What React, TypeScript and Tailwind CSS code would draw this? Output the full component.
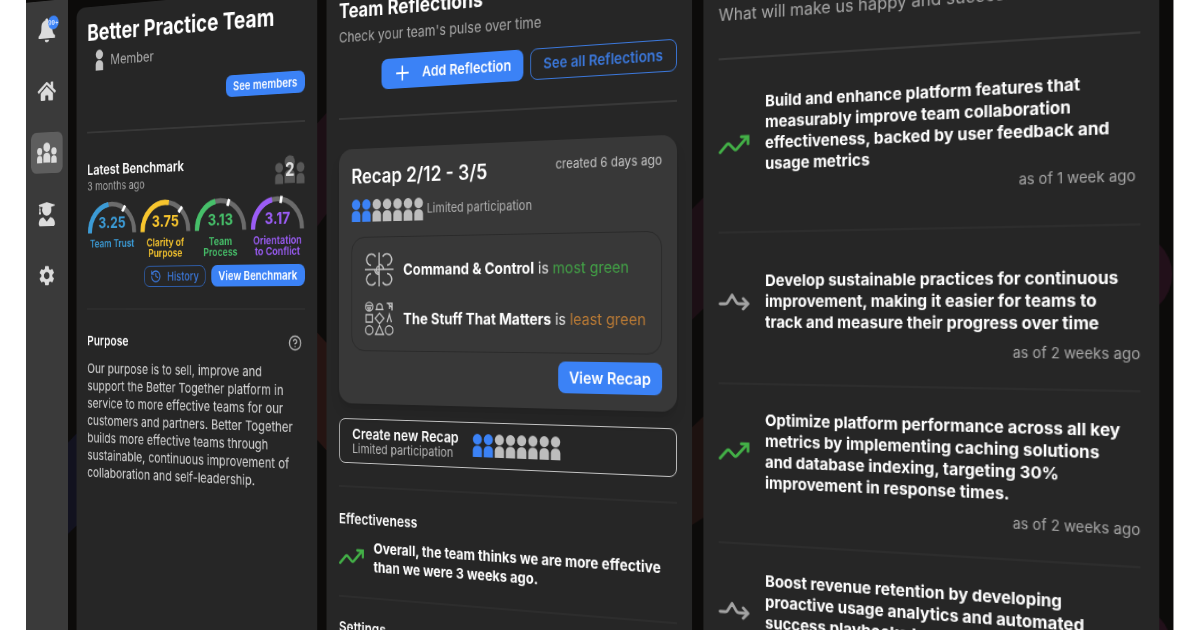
import type { ReactNode } from 'react';
import { History, Plus, CircleHelp } from 'lucide-react';
import { FaHome, FaUserGraduate } from 'react-icons/fa';
import { MdSettings } from 'react-icons/md';

function BellIcon() {
  return (
    <svg viewBox="0 0 28 30" className="h-[30px] w-7" fill="currentColor" aria-hidden="true">
      <path d="M14 1.5c1.4 0 2.3 1 2.3 2.3 3.9 1 6 4.300 6 8.400 0 5.600 1.200 7.800 4.200 9.900v2.900H1.500v-2.900c3-2.100 4.200-4.300 4.200-9.900 0-4.100 2.100-7.400 6-8.400 0-1.300.9-2.300 2.300-2.300z" />
      <path d="M10.800 26.800h6.400a3.200 2.600 0 0 1-6.400 0z" />
    </svg>
  );
}

function PersonShape({ x, y = 0, scale = 1 }: { x: number; y?: number; scale?: number }) {
  return (
    <g transform={`translate(${x} ${y}) scale(${scale})`}>
      <ellipse cx="6" cy="5.600" rx="5.300" ry="5.600" />
      <path d="M.6 24v-6.500c0-3.400 2.200-5.200 5.400-5.200s5.400 1.800 5.400 5.200V24z" />
    </g>
  );
}

function TeamIcon({ className }: { className: string }) {
  return (
    <svg viewBox="0 0 41 32" className={className} fill="currentColor" aria-hidden="true">
      <PersonShape x={0} y={8} />
      <PersonShape x={29} y={8} />
      <PersonShape x={12.700} y={0} scale={1.3} />
    </svg>
  );
}

function PeopleMeter({ total, active }: { total: number; active: number }) {
  return (
    <span className="flex gap-px" role="img" aria-label={`${active} of ${total} participating`}>
      {Array.from({ length: total }, (_, i) => (
        <svg
          key={i}
          viewBox="0 0 12 24"
          className={i < active ? 'h-6 w-3 text-[#3b82f6]' : 'h-6 w-3 text-[#bdbdbd]'}
          fill="currentColor"
        >
          <PersonShape x={0} />
        </svg>
      ))}
    </span>
  );
}

function TrendUp() {
  return (
    <svg viewBox="0 0 32 20" className="h-5 w-8 shrink-0 text-[#43b047]" fill="none" stroke="currentColor" strokeWidth="2.800" strokeLinecap="round" strokeLinejoin="round" role="img" aria-label="Improving">
      <path d="M1.500 17.500 8.500 10q1.500-1.500 3 0l4.500 4.500q1.500 1.500 3 0L29 4" />
      <path d="M23.500 3H30.500V10" strokeLinejoin="miter" />
    </svg>
  );
}

function TrendFlat() {
  return (
    <svg viewBox="0 0 32 20" className="h-5 w-8 shrink-0 text-[#a3a3a3]" fill="none" stroke="currentColor" strokeWidth="2.800" strokeLinecap="round" strokeLinejoin="round" role="img" aria-label="Steady">
      <path d="M1.500 12H7q1.500 0 2.300-1.300L14 3.500l4.500 7.200Q19.500 12 21 12H30" />
      <path d="M25.500 7 30.500 12 25.500 17" />
    </svg>
  );
}

function CommandIcon() {
  return (
    <svg viewBox="0 0 36 36" className="size-9 shrink-0" fill="none" stroke="#c4c4c4" strokeWidth="1.500" aria-hidden="true">
      <path d="M18 0v36M0 18h36" />
      <path d="M13.500 4.500A6 6 0 1 0 8 13.500M22.500 4.500A6 6 0 1 1 28 13.500M13.500 31.500A6 6 0 1 1 8 22.500M22.500 31.500A6 6 0 1 0 28 22.500" />
      <path d="M12.500 18a5.500 5.500 0 0 0 5.500 5.500M18 12.500a5.500 5.500 0 0 1 5.500 5.500M18 14.500a3.500 3.500 0 0 0 0 7" />
    </svg>
  );
}

function ShapesIcon() {
  return (
    <svg viewBox="0 0 36 36" className="size-9 shrink-0" fill="none" stroke="#c4c4c4" strokeWidth="1.400" aria-hidden="true">
      <circle cx="5.500" cy="5.500" r="4.600" />
      <path d="M2 4.500h7M3 7h5M3.500 9h4" />
      <path d="M13.500 8.500h10M15 8.500V6a3.500 3.500 0 0 1 7 0v2.500" />
      <path d="M27.500 2H34v7.500M29 2l5 4.500M31 4v4" />
      <path d="M1.500 14h8v8h-8zM18.500 12.500 24 18l-5.500 5.500L13 18zM28 22l2.800-8.500L33.500 22" />
      <circle cx="5.500" cy="30.500" r="4.700" />
      <path d="M18.500 25.500 23.500 35h-10z" />
      <circle cx="30.500" cy="30.500" r="4.700" />
    </svg>
  );
}

type GaugeData = { label: string; value: string; score: number; mark: number; color: string; text: string };

const gauges: GaugeData[] = [
  { label: 'Team Trust', value: '3.25', score: 0.45, mark: 0.68, color: '#3b9bd6', text: 'text-[#3b9bd6]' },
  { label: 'Clarity of Purpose', value: '3.75', score: 0.55, mark: 0.73, color: '#f7c52d', text: 'text-[#f7c52d]' },
  { label: 'Team Process', value: '3.13', score: 0.43, mark: 0.61, color: '#46bf69', text: 'text-[#46bf69]' },
  { label: 'Orientation to Conflict', value: '3.17', score: 0.43, mark: 0.55, color: '#9b5cf6', text: 'text-[#9b5cf6]' },
];

function point(fraction: number, radius: number) {
  const a = Math.PI * (1 - fraction);
  return [36 + radius * Math.cos(a), 37 - radius * Math.sin(a)];
}

function Gauge({ gauge }: { gauge: GaugeData }) {
  const [ex, ey] = point(gauge.score, 32.5);
  const [ix, iy] = point(gauge.mark, 28);
  const [ox, oy] = point(gauge.mark, 36);
  return (
    <li className={`flex flex-col items-center ${gauge.text}`}>
      <div className="relative w-full">
        <svg viewBox="0 0 72 38" className="h-[38px] w-full" fill="none" aria-hidden="true">
          <path d="M3.500 37.500V37a32.500 32.500 0 0 1 65 0v.5" stroke="#6b6b6b" strokeWidth="5.500" />
          <path d={`M3.5 37.5V37A32.5 32.5 0 0 1 ${ex} ${ey}`} stroke={gauge.color} strokeWidth="6" />
          <path d={`M${ix} ${iy}L${ox} ${oy}`} stroke="#fff" strokeWidth="3.500" />
        </svg>
        <span className="absolute inset-x-0 bottom-0.5 text-center text-lg leading-5 font-bold">{gauge.value}</span>
      </div>
      <span className="mt-1.5 text-center text-xs leading-3 font-semibold">{gauge.label}</span>
    </li>
  );
}

function Divider({ strong = false }: { strong?: boolean }) {
  return <hr className={strong ? 'h-0.5 border-0 bg-[#383838]' : 'h-0.5 border-0 bg-[#2d2d2d]'} />;
}

function NavItem({ label, active = false, children }: { label: string; active?: boolean; children: ReactNode }) {
  return (
    <a
      href="#"
      aria-label={label}
      className={`relative flex size-12 items-center justify-center rounded-lg text-[#dcdcdc] ${active ? 'bg-[#5e5e5e]' : ''}`}
    >
      {children}
    </a>
  );
}

function Sidebar() {
  return (
    <nav className="flex w-16 shrink-0 flex-col items-center gap-6 bg-[#3a3a3a] pt-2.5">
      <NavItem label="Notifications">
        <BellIcon />
        <span className="absolute top-2 right-1.5 flex size-4 items-center justify-center rounded-full bg-[#3b82f6] text-[8px] font-bold text-[#cfe0ff]">
          99+
        </span>
      </NavItem>
      <NavItem label="Home">
        <FaHome className="size-7" />
      </NavItem>
      <NavItem label="Teams" active>
        <TeamIcon className="h-6 w-8" />
      </NavItem>
      <NavItem label="Learning">
        <FaUserGraduate className="size-7" />
      </NavItem>
      <NavItem label="Settings">
        <MdSettings className="size-7" />
      </NavItem>
    </nav>
  );
}

function TeamPanel() {
  return (
    <section className="w-[336px] shrink-0 rounded-t-xl bg-[#262626] px-4 pt-3.5">
      <h1 className="text-[26px] leading-8 font-bold">Better Practice Team</h1>
      <p className="mt-1 flex items-center gap-2.5 pl-3 text-base leading-6 text-[#a8a8a8]">
        <svg viewBox="0 0 12 24" className="h-6 w-3 text-[#c4c4c4]" fill="currentColor" aria-hidden="true">
          <PersonShape x={0} />
        </svg>
        Member
      </p>
      <div className="mt-4 flex justify-end">
        <button type="button" className="h-6 rounded-lg bg-[#3b82f6] px-2.5 text-[13px] leading-6 font-semibold">
          See members
        </button>
      </div>
      <div className="mt-7.5">
        <Divider strong />
      </div>

      <div className="mt-8 flex items-center justify-between">
        <div>
          <h2 className="text-base leading-5 font-semibold">Latest Benchmark</h2>
          <p className="text-[13px] leading-[18px] text-[#a8a8a8]">3 months ago</p>
        </div>
        <div className="relative">
          <TeamIcon className="h-8 w-10 text-[#585858]" />
          <span className="absolute inset-x-0 bottom-1 text-center text-xl leading-6 font-bold text-[#dedede]">2</span>
        </div>
      </div>
      <ul className="mt-2 grid grid-cols-4 gap-1">
        {gauges.map((g) => (
          <Gauge key={g.label} gauge={g} />
        ))}
      </ul>
      <div className="mt-2 flex justify-end gap-2">
        <button type="button" className="flex h-6 items-center gap-2 rounded-lg border border-[#2f62b5] px-2 text-[13px] leading-5 font-medium text-[#3b78dc]">
          <History className="size-4" />
          History
        </button>
        <button type="button" className="h-6 rounded-lg bg-[#3b82f6] px-2.5 text-[13px] leading-6 font-semibold">
          View Benchmark
        </button>
      </div>
      <div className="mt-6">
        <Divider />
      </div>

      <div className="mt-6.5 flex items-center justify-between pr-1">
        <h2 className="text-[15px] leading-5 font-semibold">Purpose</h2>
        <button type="button" aria-label="About purpose">
          <CircleHelp className="size-[18px] text-[#bdbdbd]" />
        </button>
      </div>
      <p className="mt-3 text-[15px] leading-5 text-[#d6d6d6]">
        Our purpose is to sell, improve and support the Better Together platform in service to more effective teams for our
        customers and partners. Better Together builds more effective teams through sustainable, continuous improvement of
        collaboration and self-leadership.
      </p>
    </section>
  );
}

function ReflectionsPanel() {
  return (
    <section className="w-[428px] shrink-0 rounded-t-xl bg-[#262626] px-4 pt-4">
      <h1 className="text-[21px] leading-7 font-bold">Team Reflections</h1>
      <p className="mt-1 text-[15px] leading-5 text-[#a8a8a8]">Check your team's pulse over time</p>
      <div className="mt-4 flex justify-end gap-2">
        <button type="button" className="flex h-8 items-center gap-3 rounded-lg bg-[#3b82f6] px-3.5 text-[15px] font-semibold">
          <Plus className="size-6" strokeWidth={2} />
          Add Reflection
        </button>
        <button type="button" className="h-8 rounded-lg border border-[#3b78dc] px-3.5 text-[15px] font-semibold text-[#3b78dc]">
          See all Reflections
        </button>
      </div>
      <div className="mt-7">
        <Divider strong />
      </div>

      <article className="mt-8 rounded-2xl bg-[#383838] p-4 shadow-lg">
        <div className="flex items-start justify-between">
          <h2 className="text-[21px] leading-7 font-semibold">Recap 2/12 - 3/5</h2>
          <span className="text-[13px] leading-4 text-[#c4c4c4]">created 6 days ago</span>
        </div>
        <p className="mt-2.5 flex items-center gap-1 text-[13px] text-[#b0b0b0]">
          <PeopleMeter total={7} active={2} />
          Limited participation
        </p>
        <ul className="mt-4 flex flex-col gap-4 rounded-2xl border border-[#2a2a2a] p-4 text-base text-[#e4e4e4]">
          <li className="flex items-center gap-3">
            <CommandIcon />
            <p>
              <strong className="font-bold text-white">Command &amp; Control</strong> is{' '}
              <span className="text-[#42a046]">most green</span>
            </p>
          </li>
          <li className="flex items-center gap-3">
            <ShapesIcon />
            <p>
              <strong className="font-bold text-white">The Stuff That Matters</strong> is{' '}
              <span className="text-[#b97a35]">least green</span>
            </p>
          </li>
        </ul>
        <div className="mt-2 flex justify-end">
          <button type="button" className="h-8 rounded-lg bg-[#3b82f6] px-3 text-base font-semibold">
            View Recap
          </button>
        </div>
      </article>

      <button type="button" className="mt-4 flex h-12 w-full items-center gap-4 rounded-lg border border-[#c4c4c4] px-4 text-left">
        <span className="flex flex-col">
          <span className="text-[15px] leading-4 font-semibold">Create new Recap</span>
          <span className="text-[13px] leading-3.5 text-[#b8b8b8]">Limited participation</span>
        </span>
        <PeopleMeter total={8} active={2} />
      </button>
      <div className="mt-6">
        <Divider />
      </div>

      <h2 className="mt-6 text-[15px] leading-5 font-semibold">Effectiveness</h2>
      <div className="mt-2.5 flex items-center gap-3">
        <TrendUp />
        <p className="text-[15px] leading-5 font-bold">
          Overall, the team thinks we are more effective than we were 3 weeks ago.
        </p>
      </div>
      <div className="mt-5.5">
        <Divider />
      </div>
      <h2 className="mt-5.5 text-[15px] leading-5 font-semibold">Settings</h2>
    </section>
  );
}

function GoalsPanel() {
  return (
    <section className="min-w-0 flex-1 rounded-t-xl bg-[#262626] px-4 pt-[52px]">
      <p className="text-base leading-6 text-[#a8a8a8]">What will make us happy and successful</p>
      <div className="mt-7.5">
        <Divider strong />
      </div>

      <article className="flex items-center gap-4 pt-8 pr-1 pb-8.5">
        <TrendUp />
        <div className="flex-1">
          <p className="pr-2 text-[15px] leading-5 font-bold">
            Build and enhance platform features that measurably improve team collaboration effectiveness, backed by user
            feedback and usage metrics
          </p>
          <p className="mt-1 text-right text-[13px] leading-4 text-[#a8a8a8]">as of 1 week ago</p>
        </div>
      </article>
      <Divider />

      <article className="pt-9 pb-6">
        <div className="flex items-center gap-4">
          <TrendFlat />
          <p className="pr-2 text-[15px] leading-5 font-bold">
            Develop sustainable practices for continuous improvement, making it easier for teams to track and measure their
            progress over time
          </p>
        </div>
        <p className="mt-2 text-right text-[13px] leading-4 text-[#a8a8a8]">as of 2 weeks ago</p>
      </article>
      <Divider />

      <article className="pt-6 pb-6">
        <div className="flex items-center gap-4">
          <TrendUp />
          <p className="pr-2 text-[15px] leading-5 font-bold">
            Optimize platform performance across all key metrics by implementing caching solutions and database indexing,
            targeting 30% improvement in response times.
          </p>
        </div>
        <p className="mt-2 text-right text-[13px] leading-4 text-[#a8a8a8]">as of 2 weeks ago</p>
      </article>
      <Divider />

      <article className="pt-6 pb-6">
        <div className="flex items-center gap-4">
          <TrendFlat />
          <p className="pr-2 text-[15px] leading-5 font-bold">
            Boost revenue retention by developing proactive usage analytics and automated success playbooks to reduce churn
            across all of our customer accounts
          </p>
        </div>
      </article>
    </section>
  );
}

function Backdrop() {
  return (
    <svg className="absolute inset-0 h-full w-full" aria-hidden="true">
      <path d="M60 520 80 503v107L60 626z" fill="#12121f" />
      <path d="M408 165 430 145v108L408 277z" fill="#1c0f15" />
      <path d="M408 382 430 402v116L408 498z" fill="#251412" />
      <path d="M848 268 870 248v108L848 376z" fill="#1c0f15" />
      <path d="M848 481 870 461v100L848 575z" fill="#1d1210" />
      <circle cx="1269" cy="331" r="37" fill="#22101a" />
      <circle cx="1269" cy="656" r="37" fill="#22101a" />
    </svg>
  );
}

export default function App() {
  return (
    <main className="h-screen overflow-hidden bg-white font-['Inter','Noto_Sans',sans-serif] text-white perspective-[1844px] perspective-origin-[50%_309px]">
      <div className="origin-[50%_309px] -rotate-y-26">
        <div className="mr-[46px] -mt-[112px] -ml-[153px] bg-[#0c0b0a] pt-15">
          <div className="relative flex min-h-[800px]">
            <Backdrop />
            <div className="relative flex flex-1">
              <Sidebar />
              <div className="flex min-w-0 flex-1 gap-3 pt-3 pr-3 pl-[13px]">
                <TeamPanel />
                <ReflectionsPanel />
                <GoalsPanel />
              </div>
            </div>
          </div>
        </div>
      </div>
    </main>
  );
}
